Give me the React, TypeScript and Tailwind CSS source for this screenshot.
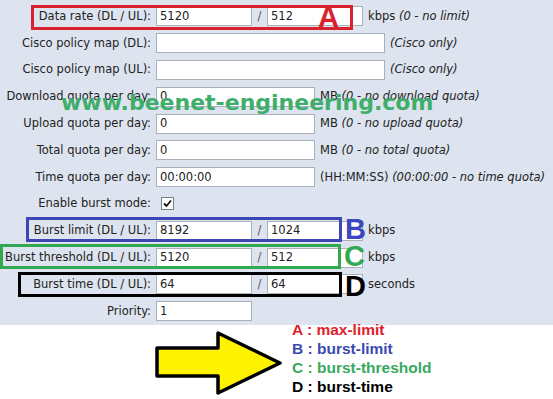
import React from "react";

const font = { fontFamily: '"DejaVu Sans", Verdana, sans-serif' };

function Row({ label, children }: { label: string; children?: React.ReactNode }) {
  return (
    <div className="flex h-[26.8px] items-center">
      <div className="w-[151px] shrink-0 whitespace-nowrap text-right">{label}</div>
      <div className="ml-[5px] flex items-center whitespace-nowrap">{children}</div>
    </div>
  );
}

function Box({ w, value }: { w: string; value?: string }) {
  return (
    <div className={`flex h-[20px] items-center border border-[#a9b0ba] bg-white pl-[3px] ${w}`}>
      {value}
    </div>
  );
}

function Pair({ a, b }: { a: string; b: string }) {
  return (
    <>
      <Box w="w-[96px]" value={a} />
      <div className="w-[15px] text-center text-[#555]">/</div>
      <Box w="w-[96px]" value={b} />
    </>
  );
}

export default function App() {
  return (
    <div className="relative h-[399px] w-[553px] overflow-hidden bg-white text-[11.5px] text-[#222]" style={font}>
      <div className="h-[324.6px] bg-[#dde4ef] pt-[3px]">
        <Row label="Data rate (DL / UL):">
          <Pair a="5120" b="512" />
          <span className="ml-[5px]">kbps <i>(0 - no limit)</i></span>
        </Row>
        <Row label="Cisco policy map (DL):">
          <Box w="w-[229px]" />
          <i className="ml-[5px]">(Cisco only)</i>
        </Row>
        <Row label="Cisco policy map (UL):">
          <Box w="w-[229px]" />
          <i className="ml-[5px]">(Cisco only)</i>
        </Row>
        <Row label="Download quota per day:">
          <Box w="w-[159px]" value="0" />
          <span className="ml-[5px]">MB <i>(0 - no download quota)</i></span>
        </Row>
        <Row label="Upload quota per day:">
          <Box w="w-[159px]" value="0" />
          <span className="ml-[5px]">MB <i>(0 - no upload quota)</i></span>
        </Row>
        <Row label="Total quota per day:">
          <Box w="w-[159px]" value="0" />
          <span className="ml-[5px]">MB <i>(0 - no total quota)</i></span>
        </Row>
        <Row label="Time quota per day:">
          <Box w="w-[159px]" value="00:00:00" />
          <span className="ml-[5px]">(HH:MM:SS) <i>(00:00:00 - no time quota)</i></span>
        </Row>
        <Row label="Enable burst mode:">
          <div className="ml-[5px] flex h-[13px] w-[13px] items-center justify-center border border-[#7a7f88] bg-white">
            <svg width="9" height="9" viewBox="0 0 9 9">
              <path d="M1 4.5 L3.5 7 L8 1.5" fill="none" stroke="#111" strokeWidth="1.8" />
            </svg>
          </div>
        </Row>
        <Row label="Burst limit (DL / UL):">
          <Pair a="8192" b="1024" />
          <span className="ml-[5px]">kbps</span>
        </Row>
        <Row label="Burst threshold (DL / UL):">
          <Pair a="5120" b="512" />
          <span className="ml-[5px]">kbps</span>
        </Row>
        <Row label="Burst time (DL / UL):">
          <Pair a="64" b="64" />
          <span className="ml-[5px]">seconds</span>
        </Row>
        <Row label="Priority:">
          <Box w="w-[96px]" value="1" />
        </Row>
      </div>

      <div className="flex pl-[155px] pt-[5px]">
        <svg width="130" height="68" viewBox="0 0 130 68">
          <polygon
            points="2,18 63,18 63,3 125,33 63,63 63,46 2,46"
            fill="#fff200"
            stroke="#000"
            strokeWidth="3.5"
            strokeLinejoin="round"
          />
        </svg>
        <div
          className="-mt-[10px] ml-[7px] text-[15.5px] font-bold leading-[19px]"
          style={{ fontFamily: '"Liberation Sans", Arial, sans-serif' }}
        >
          <div className="text-[#e0212b]">A : max-limit</div>
          <div className="text-[#3b49b0]">B : burst-limit</div>
          <div className="text-[#39a85f]">C : burst-threshold</div>
          <div className="text-black">D : burst-time</div>
        </div>
      </div>

      {/* watermark */}
      <div
        className="pointer-events-none absolute left-[61px] top-[90px] text-[22px] font-bold leading-[26px] text-[#3fae6a]"
        style={font}
      >
        www.beenet-engineering.com
      </div>

      {/* annotation boxes */}
      <div className="absolute left-[31px] top-[5px] h-[25px] w-[322px] border-[3px] border-[#d8232f]" />
      <div className="absolute left-[26px] top-[217px] h-[25px] w-[316px] border-[3px] border-[#3c46b4]" />
      <div className="absolute left-0 top-[244px] h-[25px] w-[341px] border-[3px] border-[#33a853]" />
      <div className="absolute left-[18px] top-[272px] h-[25px] w-[324px] border-[3px] border-black" />

      <div
        className="pointer-events-none absolute inset-0 text-[29px] font-bold leading-none"
        style={{ fontFamily: '"Liberation Sans", Arial, sans-serif' }}
      >
        <span className="absolute left-[318px] top-[3px] text-[#d8232f]">A</span>
        <span className="absolute left-[345px] top-[215px] text-[#3c46c0]">B</span>
        <span className="absolute left-[344px] top-[242px] text-[#33a853]">C</span>
        <span className="absolute left-[345px] top-[272px] text-black">D</span>
      </div>
    </div>
  );
}
